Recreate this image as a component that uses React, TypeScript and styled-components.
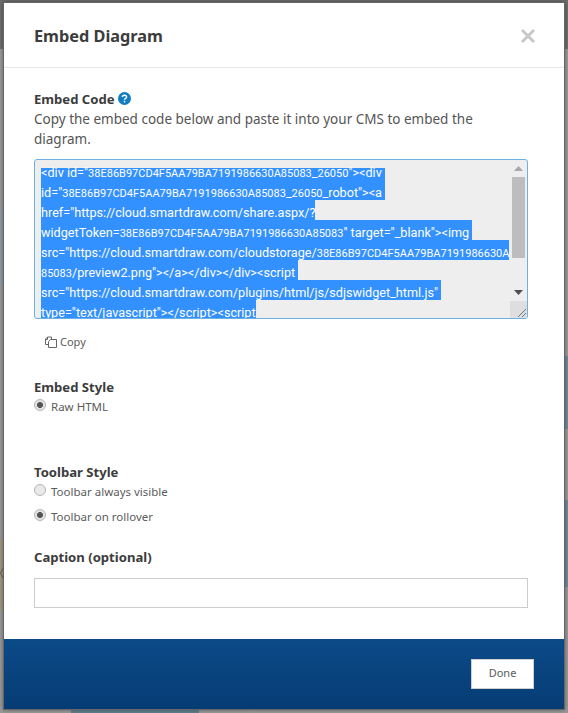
import React from 'react';
import styled, { createGlobalStyle } from 'styled-components';

const GlobalStyle = createGlobalStyle`
  html, body {
    margin: 0;
    padding: 0;
    height: 713px;
    overflow: hidden;
    background-color: #999;
  }
`;

// the dimmed page behind the dialog only peeks out along the window edges
const Backdrop = styled.div`
  position: relative;
  width: 568px;
  height: 713px;
  box-sizing: border-box;
  padding: 3px 4px 4px 4px;
  font-family: 'Noto Sans', sans-serif;
  background-color: #999;
  background-image:
    linear-gradient(#6e6e6e, #6e6e6e),
    linear-gradient(#8f9ba6, #8f9ba6),
    linear-gradient(#a3977a, #a3977a),
    linear-gradient(#6f8a9a, #6f8a9a),
    linear-gradient(#6f8a9a, #6f8a9a),
    linear-gradient(#5f7f90, #5f7f90);
  background-size: 100% 49px, 3px 75px, 2px 71px, 4px 73px, 4px 87px, 128px 4px;
  background-position: 0 0, 0 210px, 0 539px, 100% 356px, 100% 500px, 71px 100%;
  background-repeat: no-repeat;
`;

const PageChevron = styled.svg`
  position: absolute;
  left: 0;
  top: 567px;
`;

const Modal = styled.section`
  width: 100%;
  height: 100%;
  display: flex;
  flex-direction: column;
  background-color: #fff;
  color: #555;
  box-shadow: 0 0 0 1px #666, 0 0 4px 1px rgba(0, 0, 0, 0.4);
`;

const ModalHeader = styled.header`
  height: 65px;
  flex: none;
  box-sizing: border-box;
  display: flex;
  align-items: center;
  justify-content: space-between;
  padding: 2px 28px 0 30px;
  border-bottom: 1px solid #e8e8e8;
`;

const Title = styled.h1`
  margin: 0;
  font-size: 16.3px;
  font-weight: 700;
  color: #3c3c3c;
`;

const CloseButton = styled.button`
  border: 0;
  padding: 0;
  background: none;
  display: flex;
  color: #c8c8c8;
`;

const Body = styled.div`
  flex: 1;
  display: flex;
  flex-direction: column;
  padding: 21px 36px 0 30px;
`;

const Label = styled.div`
  display: flex;
  align-items: center;
  gap: 3px;
  font-size: 13.1px;
  font-weight: 700;
  line-height: 20px;
  color: #3c3c3c;
`;

const HelpIcon = styled.svg`
  margin-top: -2px;
`;

const Hint = styled.p`
  margin: 0 0 10px;
  font-size: 13.5px;
  line-height: 20px;
`;

const CodeBox = styled.div`
  height: 160px;
  box-sizing: border-box;
  display: flex;
  border: 1px solid #6cb0e6;
  border-radius: 3px;
  background-color: #eeeeee;
  overflow: hidden;
`;

const CodeText = styled.div`
  flex: 1;
  min-width: 0;
  padding: 0 6px;
  font-family: Roboto, sans-serif;
  font-size: 12.65px;
  white-space: nowrap;
  color: #fff;
`;

const CodeLine = styled.div<{ $first?: boolean }>`
  height: ${p => (p.$first ? 12 : 20)}px;
  margin-top: ${p => (p.$first ? 8 : 0)}px;
  display: flex;
`;

const Selected = styled.span<{ $first?: boolean }>`
  height: inherit;
  white-space: pre;
  line-height: ${p => (p.$first ? 10 : 26)}px;
  background-color: #3390ff;
`;

// the ids set noticeably narrower than the rest of the code
const HexId = styled.span`
  font-size: 11px;
`;

const Scrollbar = styled.div`
  width: 17px;
  flex: none;
  display: flex;
  flex-direction: column;
  align-items: center;
`;

const ScrollButton = styled.div`
  height: 17px;
  display: flex;
  align-items: center;
  justify-content: center;
`;

const ScrollTrack = styled.div`
  flex: 1;
  width: 100%;
`;

const ScrollThumb = styled.div`
  width: 13px;
  height: 81px;
  margin: 0 auto;
  background-color: #bdbdbd;
`;

const ResizeCorner = styled.div`
  width: 17px;
  height: 17px;
  background-color: #dedede;
  display: flex;
`;

const CopyButton = styled.button`
  align-self: flex-start;
  display: flex;
  align-items: center;
  gap: 3px;
  margin: 15px 0 0 11px;
  padding: 0;
  border: 0;
  background: none;
  font: 400 11px 'Noto Sans', sans-serif;
  line-height: 16px;
  color: #5c5c5c;
`;

const Section = styled.div<{ $top: number }>`
  margin-top: ${p => p.$top}px;
`;

const RadioRow = styled.label<{ $top?: number }>`
  display: flex;
  align-items: center;
  gap: 5px;
  height: 16px;
  margin-top: ${p => p.$top ?? 0}px;
  font-size: 11.5px;
  color: #5c5c5c;
`;

const Radio = styled.span<{ $checked?: boolean }>`
  width: 12px;
  height: 12px;
  margin-bottom: 3px;
  box-sizing: border-box;
  border-radius: 50%;
  border: 1px solid #b4b4b4;
  background: ${p => p.$checked
    ? 'radial-gradient(circle, #555 0 2.6px, #e4e4e4 3.4px)'
    : '#e9e9e9'};
`;

const TextInput = styled.input`
  display: block;
  width: 100%;
  height: 30px;
  margin-top: 11px;
  box-sizing: border-box;
  border: 1px solid #cccccc;
  background-color: #fff;
`;

const ModalFooter = styled.footer`
  height: 70px;
  flex: none;
  display: flex;
  align-items: center;
  justify-content: flex-end;
  padding: 0 30px 0 0;
  background: linear-gradient(#0b4a88, #063c74);
`;

const DoneButton = styled.button`
  width: 63px;
  height: 30px;
  box-sizing: border-box;
  padding: 0 0 3px;
  border: 1px solid #d0d0d0;
  background-color: #fff;
  font: 400 11px 'Noto Sans', sans-serif;
  color: #5c5c5c;
`;

const codeLines = [
  '<div id="38E86B97CD4F5AA79BA7191986630A85083_26050"><div ',
  'id="38E86B97CD4F5AA79BA7191986630A85083_26050_robot"><a ',
  'href="https://cloud.smartdraw.com/share.aspx/?',
  'widgetToken=38E86B97CD4F5AA79BA7191986630A85083" target="_blank"><img ',
  'src="https://cloud.smartdraw.com/cloudstorage/38E86B97CD4F5AA79BA7191986630A',
  '85083/preview2.png"></a></div></div><script ',
  'src="https://cloud.smartdraw.com/plugins/html/js/sdjswidget_html.js" ',
  'type="text/javascript"></script><script',
];

const renderCode = (line: string) =>
  line.split(/([0-9A-F]{5,})/).map((part, i) =>
    i % 2 === 1 ? <HexId key={i}>{part}</HexId> : part,
  );

const App: React.FC = () => {
  return (
    <Backdrop>
      <GlobalStyle />
      <PageChevron width="4" height="12" viewBox="0 0 4 12">
        <path d="M3.5 0.5 L0.5 6 L3.5 11.5" stroke="#555" fill="none" />
      </PageChevron>
      <Modal>
        <ModalHeader>
          <Title>Embed Diagram</Title>
          <CloseButton aria-label="Close">
            <svg width="16" height="16" viewBox="0 0 16 16">
              <path d="M2 2 L14 14 M14 2 L2 14" stroke="currentColor" strokeWidth="3" fill="none" />
            </svg>
          </CloseButton>
        </ModalHeader>
        <Body>
          <Label>
            Embed Code
            <HelpIcon width="13" height="13" viewBox="0 0 13 13">
              <circle cx="6.5" cy="6.5" r="6.5" fill="#0f7cc4" />
              <path d="M4.4 5 C4.4 2.6 8.6 2.6 8.6 5 C8.6 6.5 6.5 6.4 6.5 7.8" stroke="#fff" strokeWidth="1.5" fill="none" />
              <rect x="5.7" y="8.8" width="1.6" height="1.6" fill="#fff" />
            </HelpIcon>
          </Label>
          <Hint>Copy the embed code below and paste it into your CMS to embed the diagram.</Hint>
          <CodeBox>
            <CodeText>
              {codeLines.map((line, i) => (
                <CodeLine key={line} $first={i === 0}>
                  <Selected $first={i === 0}>{renderCode(line)}</Selected>
                </CodeLine>
              ))}
            </CodeText>
            <Scrollbar>
              <ScrollButton>
                <svg width="9" height="5" viewBox="0 0 9 5"><path d="M4.5 0 L9 5 H0 Z" fill="#a8a8a8" /></svg>
              </ScrollButton>
              <ScrollTrack>
                <ScrollThumb />
              </ScrollTrack>
              <ScrollButton>
                <svg width="9" height="5" viewBox="0 0 9 5"><path d="M0 0 H9 L4.5 5 Z" fill="#505050" /></svg>
              </ScrollButton>
              <ResizeCorner>
                <svg width="17" height="17" viewBox="0 0 17 17">
                  <path d="M8 16 L16 8 M12 16 L16 12" stroke="#777" strokeWidth="1" fill="none" />
                </svg>
              </ResizeCorner>
            </Scrollbar>
          </CodeBox>
          <CopyButton>
            <svg width="12" height="12" viewBox="0 0 12 12" fill="none" stroke="#666" strokeWidth="1" strokeLinejoin="miter">
              <path d="M3.5 8.5 H0.5 V3 L2.5 1 H6.5 V3.5" />
              <path d="M0.5 3.5 H2.5 V1" />
              <path d="M3.5 5.5 L5.5 3.5 H11.5 V11.5 H3.5 Z" />
            </svg>
            Copy
          </CopyButton>
          <Section $top={27}>
            <Label>Embed Style</Label>
            <RadioRow $top={1}>
              <Radio $checked />
              Raw HTML
            </RadioRow>
          </Section>
          <Section $top={48}>
            <Label>Toolbar Style</Label>
            <RadioRow $top={1}>
              <Radio />
              Toolbar always visible
            </RadioRow>
            <RadioRow $top={9}>
              <Radio $checked />
              Toolbar on rollover
            </RadioRow>
          </Section>
          <Section $top={23}>
            <Label>Caption (optional)</Label>
            <TextInput />
          </Section>
        </Body>
        <ModalFooter>
          <DoneButton>Done</DoneButton>
        </ModalFooter>
      </Modal>
    </Backdrop>
  );
};

export default App;
